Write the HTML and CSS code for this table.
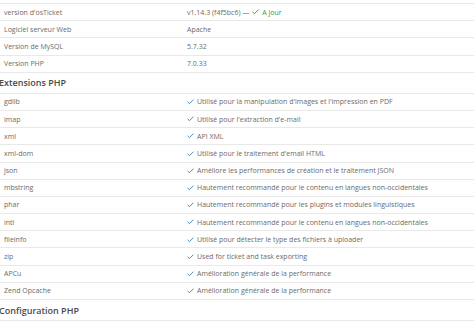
FILE: index.html
```html
<!DOCTYPE html>
<html lang="fr">
<head>
<meta charset="utf-8">
<link rel="stylesheet" href="styles.css">
</head>
<body>
<div class="page">
  <div class="rows">
    <div class="row"><div class="label">version d'osTicket</div><div class="value">v1.14.3 (f4f5bc6) — <span class="ok"><svg class="chk green" viewBox="0 0 8 6"><polyline points="0.6,3.2 2.8,5.2 7.4,0.6"/></svg> A jour</span></div></div>
    <div class="row"><div class="label">Logiciel serveur Web</div><div class="value">Apache</div></div>
    <div class="row"><div class="label">Version de MySQL</div><div class="value">5.7.32</div></div>
    <div class="row"><div class="label">Version PHP</div><div class="value">7.0.33</div></div>
  </div>
  <h2 class="section">Extensions PHP</h2>
  <div class="rows">
    <div class="row"><div class="label">gdlib</div><div class="value"><svg class="chk" viewBox="0 0 8 6"><polyline points="0.6,3.2 2.8,5.2 7.4,0.6"/></svg>Utilisé pour la manipulation d'images et l'impression en PDF</div></div>
    <div class="row"><div class="label">imap</div><div class="value"><svg class="chk" viewBox="0 0 8 6"><polyline points="0.6,3.2 2.8,5.2 7.4,0.6"/></svg>Utilisé pour l'extraction d'e-mail</div></div>
    <div class="row"><div class="label">xml</div><div class="value"><svg class="chk" viewBox="0 0 8 6"><polyline points="0.6,3.2 2.8,5.2 7.4,0.6"/></svg>API XML</div></div>
    <div class="row"><div class="label">xml-dom</div><div class="value"><svg class="chk" viewBox="0 0 8 6"><polyline points="0.6,3.2 2.8,5.2 7.4,0.6"/></svg>Utilisé pour le traitement d'email HTML</div></div>
    <div class="row"><div class="label">json</div><div class="value"><svg class="chk" viewBox="0 0 8 6"><polyline points="0.6,3.2 2.8,5.2 7.4,0.6"/></svg>Améliore les performances de création et le traitement JSON</div></div>
    <div class="row"><div class="label">mbstring</div><div class="value"><svg class="chk" viewBox="0 0 8 6"><polyline points="0.6,3.2 2.8,5.2 7.4,0.6"/></svg>Hautement recommandé pour le contenu en langues non-occidentales</div></div>
    <div class="row"><div class="label">phar</div><div class="value"><svg class="chk" viewBox="0 0 8 6"><polyline points="0.6,3.2 2.8,5.2 7.4,0.6"/></svg>Hautement recommandé pour les plugins et modules linguistiques</div></div>
    <div class="row"><div class="label">intl</div><div class="value"><svg class="chk" viewBox="0 0 8 6"><polyline points="0.6,3.2 2.8,5.2 7.4,0.6"/></svg>Hautement recommandé pour le contenu en langues non-occidentales</div></div>
    <div class="row"><div class="label">fileinfo</div><div class="value"><svg class="chk" viewBox="0 0 8 6"><polyline points="0.6,3.2 2.8,5.2 7.4,0.6"/></svg>Utilisé pour détecter le type des fichiers à uploader</div></div>
    <div class="row"><div class="label">zip</div><div class="value"><svg class="chk" viewBox="0 0 8 6"><polyline points="0.6,3.2 2.8,5.2 7.4,0.6"/></svg>Used for ticket and task exporting</div></div>
    <div class="row"><div class="label">APCu</div><div class="value"><svg class="chk" viewBox="0 0 8 6"><polyline points="0.6,3.2 2.8,5.2 7.4,0.6"/></svg>Amélioration générale de la performance</div></div>
    <div class="row"><div class="label">Zend Opcache</div><div class="value"><svg class="chk" viewBox="0 0 8 6"><polyline points="0.6,3.2 2.8,5.2 7.4,0.6"/></svg>Amélioration générale de la performance</div></div>
  </div>
  <h2 class="section">Configuration PHP</h2>
  <div class="rows">
    <div class="row"><div class="label"></div><div class="value"></div></div>
  </div>
</div>
</body>
</html>
```
FILE: styles.css
```css
html, body {
  margin: 0;
  padding: 0;
  background: #fff;
}
.page {
  padding-top: 3px;
  font-family: "Open Sans", "Liberation Sans", sans-serif;
  color: #6a6a6a;
}
.rows {
  border-top: 1px solid #e9e9e9;
}
.row {
  display: grid;
  grid-template-columns: 187px 1fr;
  height: 17.2px;
  box-sizing: border-box;
  border-bottom: 1px solid #e9e9e9;
  align-items: center;
  font-size: 7px;
  line-height: 1;
}
.label {
  padding-left: 4px;
}
.value {
  display: flex;
  align-items: center;
  white-space: nowrap;
}
.chk {
  width: 7px;
  height: 5.5px;
  margin-right: 3px;
  fill: none;
  stroke: #4d86b0;
  stroke-width: 1.1;
}
.chk.green {
  stroke: #3d9a46;
  margin-left: 3px;
}
.ok {
  display: inline-flex;
  align-items: center;
  color: #2f9a3c;
}
.section {
  margin: 0;
  height: 20px;
  display: flex;
  align-items: center;
  margin-left: -1px;
  font-size: 9px;
  font-weight: 600;
  color: #4a4a4a;
}
```
